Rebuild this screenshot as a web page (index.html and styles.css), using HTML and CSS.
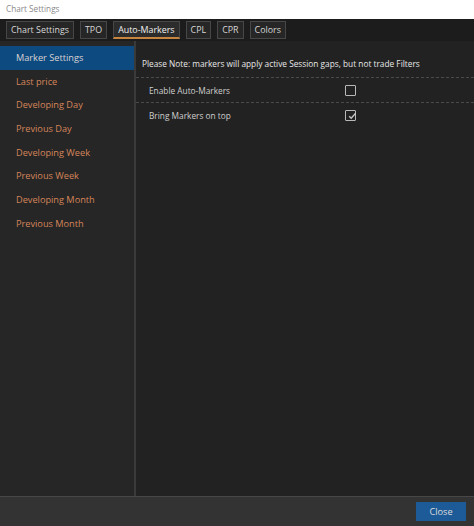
FILE: index.html
```html
<!DOCTYPE html>
<html>
<head>
<meta charset="utf-8">
<link rel="stylesheet" href="styles.css">
</head>
<body>
<div class="window">
  <div class="titlebar">Chart Settings</div>
  <div class="tabbar">
    <div class="tab">Chart Settings</div>
    <div class="tab">TPO</div>
    <div class="tab active">Auto-Markers</div>
    <div class="tab">CPL</div>
    <div class="tab">CPR</div>
    <div class="tab">Colors</div>
  </div>
  <div class="main">
    <div class="sidebar">
      <div class="item selected">Marker Settings</div>
      <div class="item">Last price</div>
      <div class="item">Developing Day</div>
      <div class="item">Previous Day</div>
      <div class="item">Developing Week</div>
      <div class="item">Previous Week</div>
      <div class="item">Developing Month</div>
      <div class="item">Previous Month</div>
    </div>
    <div class="content">
      <div class="note">Please Note: markers will apply active Session gaps, but not trade Filters</div>
      <div class="row">
        <div class="label">Enable Auto-Markers</div>
        <div class="check"><span class="box"></span></div>
      </div>
      <div class="row last">
        <div class="label">Bring Markers on top</div>
        <div class="check">
          <span class="box checked">
            <svg viewBox="0 0 12 12" width="12" height="12"><path d="M3.2 6.2 L5.2 8.2 L9.6 3.2" fill="none" stroke="#c8c8c8" stroke-width="1.3"/></svg>
          </span>
        </div>
      </div>
    </div>
  </div>
  <div class="footer">
    <div class="btn">Close</div>
  </div>
</div>
</body>
</html>
```
FILE: styles.css
```css
* { box-sizing: border-box; }
html, body { margin: 0; padding: 0; }
body {
  width: 474px;
  height: 526px;
  overflow: hidden;
  font-family: "Open Sans", "Noto Sans", sans-serif;
  font-size: 8.3px;
  background: #222222;
}
.window {
  display: flex;
  flex-direction: column;
  height: 526px;
}
.titlebar {
  height: 19px;
  background: #ffffff;
  color: #8a8a8a;
  font-size: 8.2px;
  line-height: 18px;
  padding-left: 6px;
}
.tabbar {
  height: 22px;
  background: #1c1c1c;
  display: flex;
  align-items: flex-start;
  gap: 6px;
  padding: 2px 0 0 6px;
}
.tab {
  height: 18px;
  line-height: 16px;
  padding: 0 4px;
  border: 1px solid #474747;
  background: #262626;
  color: #d6d6d6;
  font-size: 8.9px;
}
.tab.active {
  background: #2c2c2c;
  color: #f0f0f0;
  border-bottom: 2px solid #c8853f;
  line-height: 15px;
}
.main {
  flex: 1;
  display: flex;
  min-height: 0;
}
.sidebar {
  width: 136px;
  background: #262626;
  border-right: 2px solid #3a3a3a;
  padding-top: 5px;
}
.item {
  height: 23.7px;
  line-height: 23px;
  padding-left: 16px;
  color: #d5855a;
  font-size: 9.2px;
}
.item.selected {
  background: #0d4a80;
  color: #d9d2d2;
}
.content {
  flex: 1;
  background: #222222;
  padding-top: 11px;
}
.note {
  height: 26px;
  line-height: 24px;
  padding-left: 6px;
  color: #e8e8e8;
  border-bottom: 1px dashed #4a4a4a;
}
.row {
  display: grid;
  grid-template-columns: 209px 1fr;
  height: 25px;
  align-items: center;
  border-bottom: 1px dashed #4a4a4a;
}
.row.last { border-bottom: none; }
.label {
  padding-left: 13px;
  color: #cfcfcf;
}
.check { display: flex; align-items: center; }
.box {
  width: 11px;
  height: 11px;
  border: 1.3px solid #b8b8b8;
  border-radius: 1px;
  position: relative;
  display: block;
}
.box svg {
  position: absolute;
  left: -0.5px;
  top: -1.5px;
}
.footer {
  height: 30px;
  background: #333333;
  border-top: 1px solid #474747;
  display: flex;
  justify-content: flex-end;
  align-items: flex-start;
  padding: 5px 8px 0 0;
}
.btn {
  width: 50px;
  height: 19px;
  background: #1d5b98;
  color: #dcdcdc;
  text-align: center;
  line-height: 19px;
  font-size: 9.2px;
}
```
